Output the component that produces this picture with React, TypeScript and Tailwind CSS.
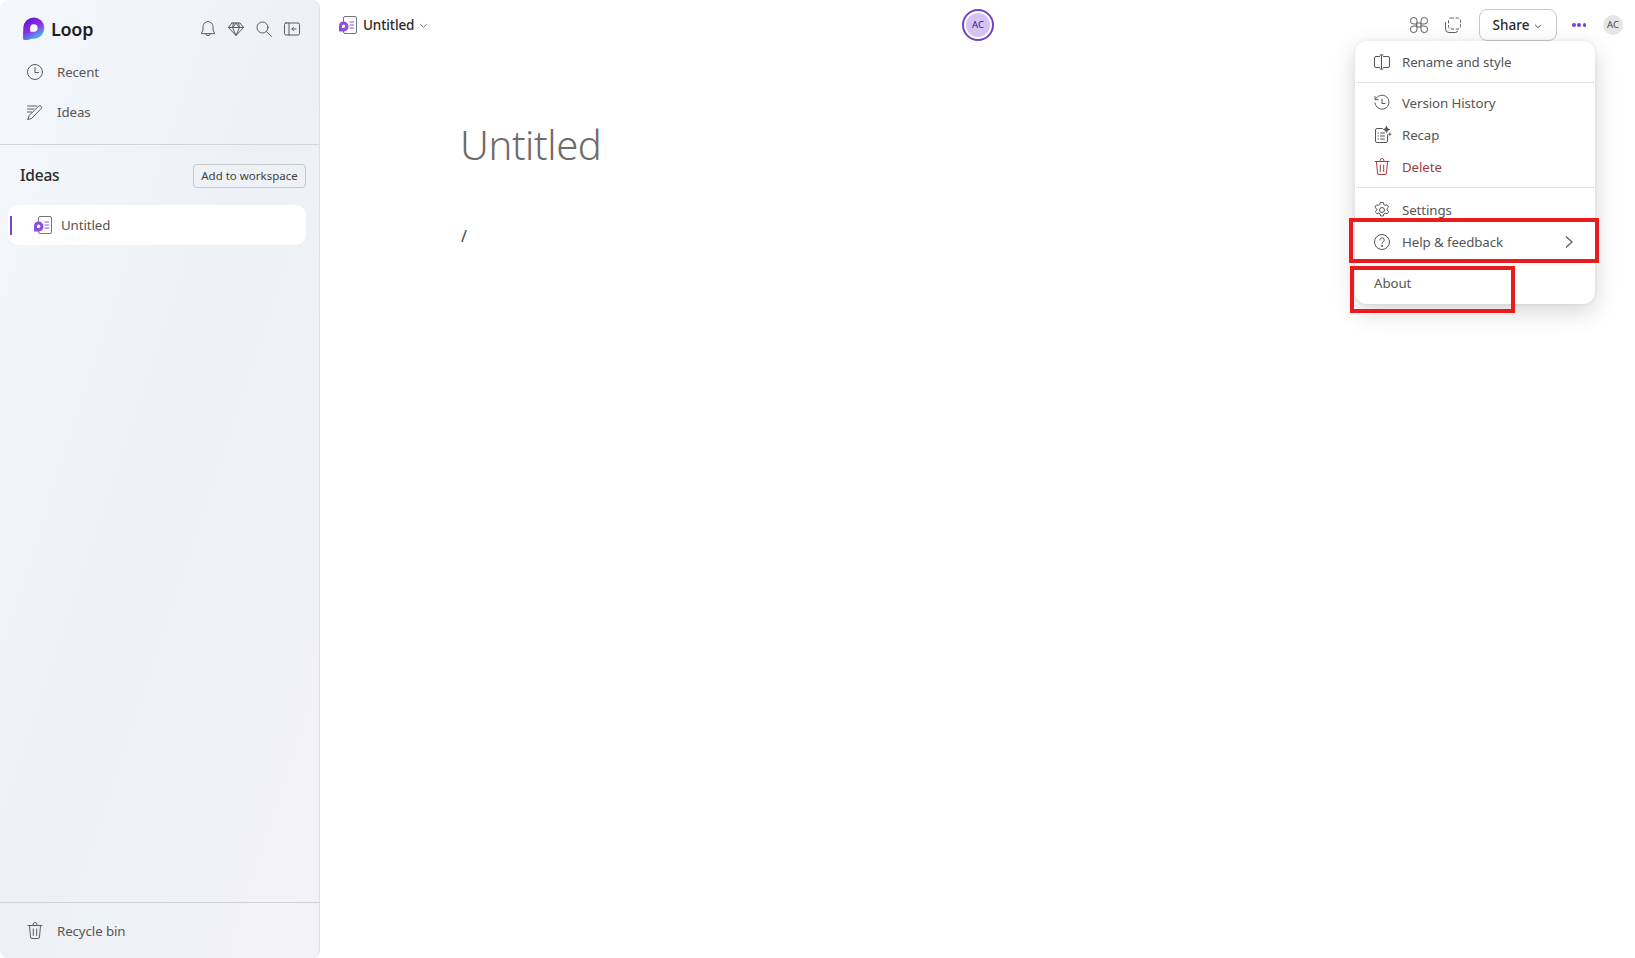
import React from "react";

const font = "font-['Noto_Sans','Open_Sans',sans-serif]";

function S({ children, className = "", size = 20, vb = 20 }: { children: React.ReactNode; className?: string; size?: number; vb?: number }) {
  return (
    <svg width={size} height={size} viewBox={`0 0 ${vb} ${vb}`} fill="none" stroke="currentColor" strokeWidth={1} strokeLinecap="round" strokeLinejoin="round" className={`shrink-0 ${className}`}>
      {children}
    </svg>
  );
}

function LoopLogo() {
  return (
    <svg width="22" height="23" viewBox="0 0 22 23" className="shrink-0">
      <defs>
        <linearGradient id="lg" x1="0.15" y1="0" x2="0.75" y2="1">
          <stop offset="0" stopColor="#5b17c9" />
          <stop offset="0.5" stopColor="#8a2fe6" />
          <stop offset="0.75" stopColor="#6d7fe8" />
          <stop offset="1" stopColor="#3ecbee" />
        </linearGradient>
        <linearGradient id="lt" x1="0" y1="0" x2="1" y2="0.6">
          <stop offset="0" stopColor="#7a22dc" />
          <stop offset="1" stopColor="#3fc4ee" />
        </linearGradient>
      </defs>
      <path d="M0.300 22.500V11A10.500 10.500 0 0 1 10.800 0.500A10.500 10.500 0 0 1 21.300 11A10.500 10.500 0 0 1 10.800 21.500H8.200A8 8 0 0 1 0.300 22.500Z" fill="url(#lg)" />
      <path d="M0.300 22.500V14C3 17.500 7 18.500 11 17.500C14.500 16.500 17 15 20.500 14.500A10.500 10.500 0 0 1 10.800 21.500H8.200Z" fill="url(#lt)" />
      <path d="M10.800 7.200a3.800 3.800 0 0 1 0 7.600H8.200a1 1 0 0 1-1-1V10.800a3.600 3.600 0 0 1 3.600-3.600Z" fill="#fff" />
    </svg>
  );
}

function DocIcon() {
  return (
    <svg width="20" height="20" viewBox="0 0 20 20" fill="none" className="shrink-0">
      <rect x="5.500" y="1.500" width="13" height="17" rx="1.500" fill="#fff" stroke="#77737a" />
      <path d="M11.500 7h4.500M11.500 10h4.500M11.500 13h4.500" stroke="#8a57d8" />
      <path d="M5.500 6.500a5 5 0 0 1 5 5c0 3-2.500 5-5 5H1V11a4.700 4.700 0 0 1 4.500-4.500Z" fill="#8b4fe0" />
      <path d="M5.700 9.600a1.700 1.700 0 0 1 0 3.400H4v-1.700a1.700 1.700 0 0 1 1.700-1.700Z" fill="#fff" />
    </svg>
  );
}

const Bell = () => (
  <S><path d="M10 2.500a5 5 0 0 1 5 5v3.500l1.500 3a.5.5 0 0 1-.5.700H4a.5.5 0 0 1-.5-.7L5 11V7.500a5 5 0 0 1 5-5Z" /><path d="M8 14.700a2 2 0 0 0 4 0" /></S>
);
const Gem = () => (
  <S><path d="M6 4h8l3.500 4.500L10 16.500 2.500 8.500 6 4Z" /><path d="M2.500 8.500h15M7.500 4 6.500 8.500 10 16.500l3.500-8L12.500 4M10 4 7 8.500M10 4l3 4.500" /></S>
);
const Search = () => (
  <S><circle cx="8.500" cy="8.500" r="5.500" /><path d="M12.700 12.700 17.500 17.500" /></S>
);
const Collapse = () => (
  <S><rect x="2.500" y="4" width="15" height="12" rx="1.500" /><path d="M7 4v12" /><path d="M14 10h-4M11.500 8.300 9.800 10l1.700 1.700" /></S>
);
const Clock = () => (
  <S><circle cx="10" cy="10" r="7.500" /><path d="M10 5.500V10.500H13.500" /></S>
);
const Ideas = () => (
  <S><path d="M2.500 4h9M2.500 7h6.500M2.500 10h4" /><path d="M3 17.500l1-3.800L13.700 4a1.800 1.800 0 0 1 2.500 2.500L6.700 16.400 3 17.500Z" /></S>
);
const Trash = () => (
  <S><path d="M8 3.500a2 2 0 0 1 4 0M3 4.500h14M4.500 4.500l1 11.500a1.500 1.500 0 0 0 1.500 1.500h6a1.500 1.500 0 0 0 1.500-1.500l1-11.500M8.300 8v6.500M11.700 8v6.500" /></S>
);
const Chevron = ({ size = 12 }: { size?: number }) => (
  <svg width={size} height={size} viewBox="0 0 12 12" fill="none" stroke="currentColor" strokeWidth={1} className="shrink-0"><path d="M2.500 4.500 6 8l3.500-3.500" /></svg>
);
const Components = () => (
  <S className="text-[#5f5f5f]"><path d="M8 8V5.800A3.300 3.300 0 1 0 4.800 9H8M12 8V5.800A3.300 3.300 0 1 1 15.200 9H12M8 12v2.200A3.300 3.300 0 1 1 4.800 11H8M12 12v2.200A3.300 3.300 0 1 0 15.200 11H12" /><rect x="8" y="8" width="4" height="4" /></S>
);
const Select = () => (
  <S className="text-[#5f5f5f]"><rect x="5.500" y="3" width="12" height="11" rx="2.500" strokeDasharray="2.600 2.400" /><path d="M2.500 7.500V14a3.500 3.500 0 0 0 3.500 3.500h6.500a2 2 0 0 0 2-1.500" /></S>
);
const RenameIcon = () => (
  <S><path d="M7.500 4.500H4a1.500 1.500 0 0 0-1.500 1.500v8A1.500 1.500 0 0 0 4 15.500h3.500M11.500 4.500H16A1.500 1.500 0 0 1 17.500 6v8a1.500 1.500 0 0 1-1.500 1.500h-4.500M9.500 3v14M8 3h3M8 17h3" /></S>
);
const History = () => (
  <S><path d="M3.500 6.500A7 7 0 1 1 3 10" /><path d="M3 3.500v3.200h3.200" /><path d="M10 6v4.500h3" /></S>
);
const Recap = () => (
  <S><path d="M10.500 3.500H5A1.500 1.500 0 0 0 3.500 5v11A1.500 1.500 0 0 0 5 17.500h9a1.500 1.500 0 0 0 1.500-1.500v-6" /><path d="M6 8h.5M6 11h.5M6 14h.5M8.500 8h4M8.500 11h4M8.500 14h4" /><path d="M14.500 1.500l.9 2.100 2.100.9-2.100.9-.9 2.100-.9-2.100-2.100-.9 2.100-.9.9-2.100Z" fill="currentColor" /><path d="M17.800 8v2.400M16.600 9.200H19" /></S>
);
const Gear = () => (
  <S><circle cx="10" cy="10" r="2.500" /><path d="M8.600 2.700a7.500 7.500 0 0 1 2.800 0l.4 1.900 1.400.8 1.900-.6a7.500 7.500 0 0 1 1.400 2.400l-1.400 1.300v1.600l1.400 1.300a7.500 7.500 0 0 1-1.400 2.400l-1.900-.6-1.400.8-.4 1.900a7.500 7.500 0 0 1-2.800 0l-.4-1.900-1.400-.8-1.900.6a7.500 7.500 0 0 1-1.400-2.400l1.400-1.300V9.500L3.100 7.200a7.500 7.500 0 0 1 1.400-2.400l1.900.6 1.400-.8.400-1.900Z" /></S>
);
const Help = () => (
  <S><circle cx="10" cy="10" r="7.500" /><path d="M7.800 8a2.200 2.200 0 1 1 3.500 1.800c-.8.600-1.300 1-1.300 2" /><circle cx="10" cy="14" r=".5" fill="currentColor" /></S>
);

function MenuRow({ icon, label, red, className = "" }: { icon: React.ReactNode; label: string; red?: boolean; className?: string }) {
  return (
    <div className={`flex items-center h-[32px] pl-[17px] gap-[10px] ${red ? "text-[#9c3d3c]" : "text-[#555555]"} ${className}`}>
      <span className={red ? "text-[#9c3d3c]" : "text-[#555]"}>{icon}</span>
      <span className="pt-[1px] text-[13.300px] tracking-[-0.1px]">{label}</span>
    </div>
  );
}

function NavRow({ icon, label }: { icon: React.ReactNode; label: string }) {
  return (
    <div className="flex items-center h-[40px] pl-[25px] gap-[12px] text-[#555555]">
      <span className="text-[#5c5c5c]">{icon}</span>
      <span className="pt-[1px] text-[13.300px] tracking-[-0.1px]">{label}</span>
    </div>
  );
}

export default function App() {
  return (
    <div className={`${font} relative flex h-[958px] w-[1635px] overflow-hidden bg-white text-[#242424]`}>
      <aside className="flex w-[320px] shrink-0 flex-col rounded-[8px] border-r border-[#e0e0e0] bg-gradient-to-br from-[#f4f7fb] via-[#edf1f6] to-[#f3f2f8]">
        <div className="flex h-[52px] items-center pl-[23px] pr-[17px] pt-[5px]">
          <LoopLogo />
          <span className="ml-[6px] text-[18px] font-semibold leading-none tracking-[-0.3px] text-[#1f1f1f]">Loop</span>
          <div className="ml-auto flex items-center gap-[8px] text-[#5c5c5c]">
            <Bell /><Gem /><Search /><Collapse />
          </div>
        </div>
        <div className="flex flex-col border-b border-[#d4d4d4] pb-[12px]">
          <NavRow icon={<Clock />} label="Recent" />
          <NavRow icon={<Ideas />} label="Ideas" />
        </div>
        <div className="flex h-[60px] items-center justify-between pl-[20px] pr-[13px] pt-[2px]">
          <span className="text-[15.500px] font-medium tracking-[-0.2px] text-[#2a2a2a]">Ideas</span>
          <button className="flex h-[24px] w-[113px] items-center justify-center rounded-[4px] border border-[#c8c8c8] text-[11.500px] text-[#424242]">Add to workspace</button>
        </div>
        <div className="relative mx-[8px] flex h-[40px] w-[298px] items-center gap-[8px] rounded-[10px] bg-white pl-[25px]">
          <span className="absolute left-[2px] top-[11px] h-[19px] w-[2px] bg-[#7b45c6]" />
          <DocIcon />
          <span className="pt-[1px] text-[13.300px] tracking-[-0.1px] text-[#555555]">Untitled</span>
        </div>
        <div className="mt-auto flex h-[56px] items-center border-t border-[#d4d4d4] pt-[1px]">
          <NavRow icon={<Trash />} label="Recycle bin" />
        </div>
      </aside>

      <main className="flex min-w-0 flex-1 flex-col">
        <header className="relative flex h-[50px] items-center pl-[18px] pr-[12px]">
          <DocIcon />
          <span className="ml-[5px] pt-[1px] text-[13.500px] font-medium tracking-[-0.1px] text-[#2a2a2a]">Untitled</span>
          <span className="ml-[4px] text-[#616161]"><Chevron size={11} /></span>
          <div className="absolute left-[642px] top-[9px] flex h-[32px] w-[32px] items-center justify-center rounded-full border-2 border-[#6f42c9] bg-white p-[2px]">
            <span className="flex h-full w-full items-center justify-center rounded-full bg-[#d5c3f5] text-[9.500px] text-[#2f1c63]">AC</span>
          </div>
          <div className="ml-auto flex items-center">
            <Components />
            <span className="ml-[14px]"><Select /></span>
            <button className="ml-[16px] flex h-[32px] w-[78px] items-center justify-center gap-[4px] rounded-[8px] border border-[#c8c8c8] pt-[1px] text-[13.500px] font-medium text-[#2a2a2a]">Share <Chevron size={10} /></button>
            <span className="ml-[15px] flex w-[14px] justify-between">
              <i className="h-[3.500px] w-[3.500px] rounded-full bg-[#7b3fe0]" />
              <i className="h-[3.500px] w-[3.500px] rounded-full bg-[#7b3fe0]" />
              <i className="h-[3.500px] w-[3.500px] rounded-full bg-[#7b3fe0]" />
            </span>
            <span className="ml-[17px] flex h-[20px] w-[20px] items-center justify-center rounded-full bg-[#e6e6e6] text-[9.500px] text-[#424242]">AC</span>
          </div>
        </header>
        <div className="pl-[140px] pt-[67px]">
          <h1 className="text-[40px] font-light leading-[56px] tracking-[-0.4px] text-[#6f6b6b]">Untitled</h1>
          <p className="ml-[1px] mt-[53px] text-[16px] leading-[20px] text-[#424242]">/</p>
        </div>
      </main>

      <div className="absolute left-[1355px] top-[41px] h-[263px] w-[240px] rounded-[12px] bg-white shadow-[0_8px_24px_rgba(0,0,0,0.16),0_0_4px_rgba(0,0,0,0.08)]">
        <div className="pt-[5px]"><MenuRow icon={<RenameIcon />} label="Rename and style" /></div>
        <div className="mx-[1px] mt-[4px] h-px bg-[#e0e0e0]" />
        <div className="pt-[4px]">
          <MenuRow icon={<History />} label="Version History" />
          <MenuRow icon={<Recap />} label="Recap" />
          <MenuRow icon={<Trash />} label="Delete" red />
        </div>
        <div className="mx-[1px] mt-[4px] h-px bg-[#e0e0e0]" />
        <div className="pt-[6px]">
          <MenuRow icon={<Gear />} label="Settings" />
          <div className="relative">
            <MenuRow icon={<Help />} label="Help & feedback" />
            <svg width="12" height="14" viewBox="0 0 12 14" fill="none" stroke="#5c5c5c" strokeWidth="1.200" className="absolute right-[20px] top-[9px]"><path d="M3 1.500 9 7l-6 5.500" /></svg>
          </div>
        </div>
        <div className="pl-[19px] pt-[16px] text-[13.300px] tracking-[-0.1px] text-[#555555]">About</div>
      </div>

      <div className="pointer-events-none absolute left-[1349px] top-[218px] h-[45px] w-[250px] border-[4px] border-[#e81c1c]" />
      <div className="pointer-events-none absolute left-[1350px] top-[266px] h-[47px] w-[165px] border-[4px] border-[#e81c1c]" />
    </div>
  );
}
